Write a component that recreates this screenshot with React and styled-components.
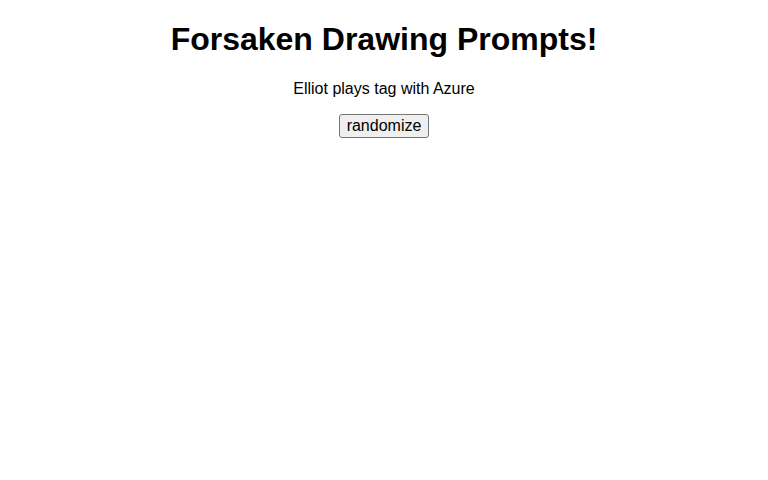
import React, { useState } from 'react'
import styled, { createGlobalStyle } from 'styled-components';

const GlobalStyle = createGlobalStyle`
    body {
        margin: 0;
        background: #ffffff;
        color: #000000;
        font-family: "Liberation Sans", Arial, sans-serif;
    }
`;

const names = ['Elliot', 'Azure', 'Chance', 'Two Time', 'Shedletsky', 'Dusekkar'];
const actions = ['plays tag with', 'bakes pizza with', 'goes fishing with', 'hides from'];

const pick = (list) => list[Math.floor(Math.random() * list.length)];

function App() {
    const [prompt, setPrompt] = useState('Elliot plays tag with Azure');

    const randomize = () => {
        setPrompt(`${pick(names)} ${pick(actions)} ${pick(names)}`);
    };

    return (
        <PageStyled>
            <GlobalStyle />
            <Title>Forsaken Drawing Prompts!</Title>
            <Prompt>{prompt}</Prompt>
            <RandomButton onClick={randomize}>randomize</RandomButton>
        </PageStyled>
    )
}

const PageStyled = styled.main`
    text-align: center;
    padding: 0 8px;
`;

const Title = styled.h1`
    font-size: 32px;
    font-weight: bold;
    margin: 21.44px 0;
    line-height: normal;
`;

const Prompt = styled.p`
    font-size: 16px;
    margin: 16px 0;
`;

const RandomButton = styled.button`
    font-family: "Liberation Sans", Arial, sans-serif;
    font-size: 16px;
    color: #000;
    background: #efefef;
    border: 1px solid #767676;
    border-radius: 3px;
    padding: 2px 7px;
    cursor: pointer;
    &:hover{
        background: #e5e5e5;
    }
`;

export default App;
